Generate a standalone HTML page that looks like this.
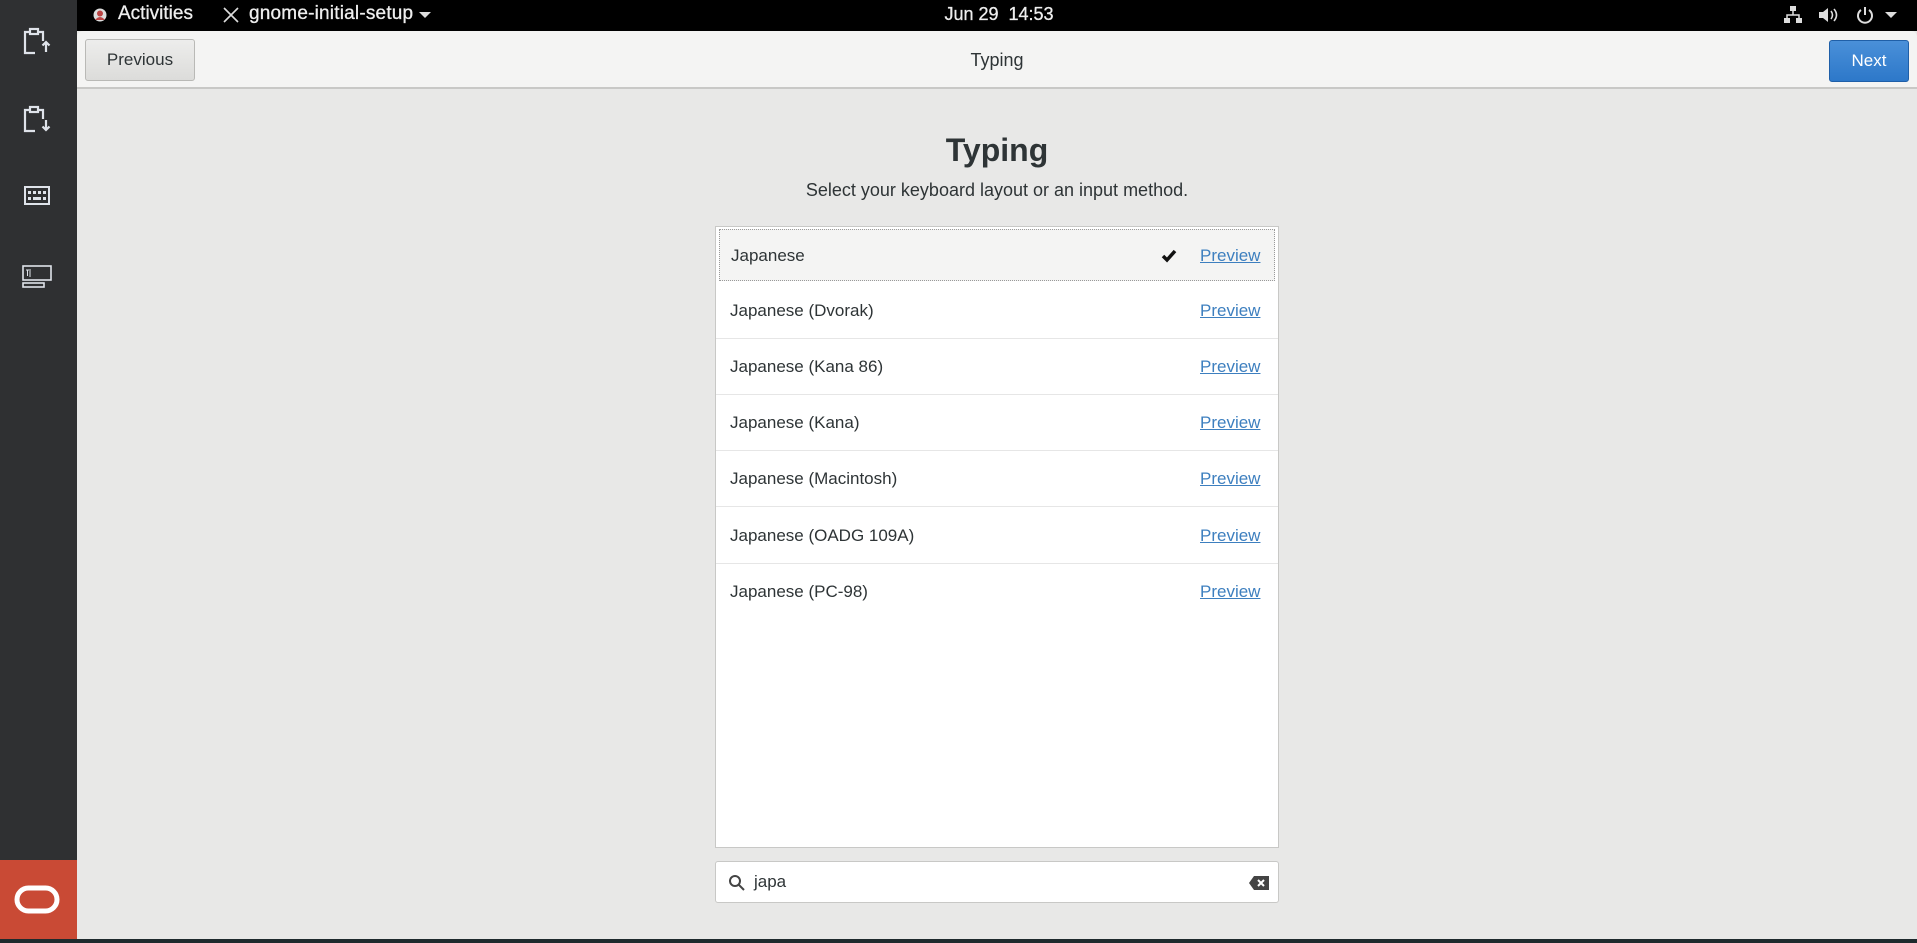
<!DOCTYPE html>
<html><head><meta charset="utf-8"><style>
*{margin:0;padding:0;box-sizing:border-box}
body{width:1917px;height:943px;overflow:hidden;background:#e8e8e7;font-family:"Liberation Sans","DejaVu Sans",sans-serif;position:relative}
.side{position:absolute;left:0;top:0;width:77px;height:939px;background:#2f3032}
.orc{position:absolute;left:0;top:860px;width:77px;height:79px;background:#c94a35}
.bot{position:absolute;left:0;top:939px;width:1917px;height:4px;background:#1e2a2d}
.topbar{position:absolute;left:77px;top:0;width:1840px;height:31px;background:#000;color:#eee;font-size:19px;-webkit-text-stroke:0.3px #eee}
.hdr{position:absolute;left:77px;top:31px;width:1840px;height:58px;background:#f4f4f3;border-bottom:2px solid #c8c8c6;border-radius:6px 6px 0 0}
.btn{position:absolute;height:42px;border-radius:3px;font-size:17px;text-align:center;line-height:40px}
.row{position:absolute;left:716px;width:562px;height:56px;border-bottom:1px solid #e6e6e6;font-size:17px;color:#2e3436}
.row span.t{position:absolute;left:14px;top:18px}
.row span.p{position:absolute;left:484px;top:18px;color:#3d7fbf;text-decoration:underline}
</style></head><body>
<div class="side">
 <svg style="position:absolute;left:23px;top:27px" width="30" height="28" viewBox="0 0 30 28" fill="none" stroke="#dfe3ea" stroke-width="2.2"><path d="M12 26H2V5h4M16 5h4v9"/><rect x="7" y="2" width="8" height="5"/><path d="M23 25V15M19.5 18.5L23 15l3.5 3.5"/></svg>
 <svg style="position:absolute;left:23px;top:105px" width="30" height="28" viewBox="0 0 30 28" fill="none" stroke="#dfe3ea" stroke-width="2.2"><path d="M12 26H2V5h4M16 5h4v9"/><rect x="7" y="2" width="8" height="5"/><path d="M23 15v10M19.5 21.5L23 25l3.5-3.5"/></svg>
 <svg style="position:absolute;left:24px;top:186px" width="26" height="20" viewBox="0 0 26 20"><rect x="1" y="1" width="24" height="17" fill="none" stroke="#dfe3ea" stroke-width="2"/><g fill="#dfe3ea"><rect x="4" y="5" width="3" height="3"/><rect x="9" y="5" width="3" height="3"/><rect x="14" y="5" width="3" height="3"/><rect x="19" y="5" width="3" height="3"/><rect x="4" y="11" width="3" height="3"/><rect x="9" y="11" width="8" height="3"/><rect x="19" y="11" width="3" height="3"/></g></svg>
 <svg style="position:absolute;left:22px;top:265px" width="30" height="24" viewBox="0 0 30 24" fill="none" stroke="#dfe3ea" stroke-width="1.6"><rect x="1" y="1" width="28" height="14"/><rect x="1" y="18" width="21" height="4"/><path d="M4 5h3M5.5 5v6M8 4v8" stroke-width="1"/></svg>
</div>
<div class="orc"><svg style="position:absolute;left:14px;top:25px" width="47" height="30" viewBox="0 0 47 30"><rect x="3" y="3" width="40" height="23" rx="11.5" fill="none" stroke="#fff" stroke-width="5"/></svg></div>
<div class="bot"></div>
<div class="topbar">
 <svg style="position:absolute;left:16px;top:8px" width="14" height="14"><circle cx="7" cy="7" r="6.5" fill="#ddd"/><circle cx="7" cy="5.5" r="3" fill="#b44"/><path d="M2 12q5-6 10 0" fill="#b44"/></svg>
 <span style="position:absolute;left:41px;top:3px">Activities</span>
 <svg style="position:absolute;left:145px;top:6px" width="18" height="18" stroke="#ddd" stroke-width="1.6"><path d="M2 2l14 14M16 2L2 16"/></svg>
 <span style="position:absolute;left:172px;top:3px;letter-spacing:0.2px">gnome-initial-setup</span>
 <svg style="position:absolute;left:342px;top:12px" width="12" height="7"><path d="M0 0h12L6 6z" fill="#ddd"/></svg>
 <span style="position:absolute;left:857px;top:4px;width:130px;text-align:center;font-size:18px">Jun 29&nbsp; 14:53</span>
 <svg style="position:absolute;left:1706px;top:5px" width="20" height="20" fill="#ddd"><rect x="7" y="1" width="6" height="5"/><rect x="1" y="13" width="6" height="5"/><rect x="13" y="13" width="6" height="5"/><path d="M10 6v4M4 13v-3h12v3" stroke="#ddd" stroke-width="1.5" fill="none"/></svg>
 <svg style="position:absolute;left:1741px;top:6px" width="22" height="18" fill="#ddd"><path d="M1 6h4l5-4v14l-5-4H1z"/><path d="M13 5q3 4 0 8M16 3q5 6 0 12" stroke="#ddd" stroke-width="1.6" fill="none"/></svg>
 <svg style="position:absolute;left:1778px;top:5px" width="20" height="20" fill="none" stroke="#ddd" stroke-width="2"><path d="M6 5a7 7 0 1 0 8 0M10 2v8"/></svg>
 <svg style="position:absolute;left:1808px;top:12px" width="12" height="7"><path d="M0 0h12L6 6z" fill="#ddd"/></svg>
</div>
<div class="hdr">
 <div class="btn" style="left:8px;top:8px;width:110px;background:linear-gradient(#ededec,#dcdcda);border:1px solid #b9b9b6;color:#2e3436">Previous</div>
 <div style="position:absolute;left:0;width:1840px;top:19px;text-align:center;font-size:18px;color:#2e3436">Typing</div>
 <div class="btn" style="left:1752px;top:9px;width:80px;background:linear-gradient(#4a90d9,#2d78c9);border:1px solid #1f5fa8;color:#fff">Next</div>
</div>
<div style="position:absolute;left:0;width:1994px;top:132px;text-align:center;font-size:32px;font-weight:bold;color:#2e3436">Typing</div>
<div style="position:absolute;left:0;width:1994px;top:180px;text-align:center;font-size:18px;color:#2e3436">Select your keyboard layout or an input method.</div>
<div style="position:absolute;left:715px;top:226px;width:564px;height:622px;background:#fff;border:1px solid #c8c8c6"></div>
<div class="row" style="top:229px;left:719px;width:556px;height:52px;background:#f4f4f3;border:1px dotted #999"><span class="t" style="left:11px;top:16px">Japanese</span><svg style="position:absolute;left:441px;top:19px" width="16" height="14"><path d="M2 7l4 4 8-9" stroke="#111" stroke-width="3.5" fill="none"/></svg><span class="p" style="left:480px;top:16px">Preview</span></div>
<div class="row" style="top:283px"><span class="t">Japanese (Dvorak)</span><span class="p">Preview</span></div>
<div class="row" style="top:339px"><span class="t">Japanese (Kana 86)</span><span class="p">Preview</span></div>
<div class="row" style="top:395px"><span class="t">Japanese (Kana)</span><span class="p">Preview</span></div>
<div class="row" style="top:451px"><span class="t">Japanese (Macintosh)</span><span class="p">Preview</span></div>
<div class="row" style="top:508px"><span class="t">Japanese (OADG 109A)</span><span class="p">Preview</span></div>
<div class="row" style="top:564px;border-bottom:none"><span class="t">Japanese (PC-98)</span><span class="p">Preview</span></div>
<div style="position:absolute;left:715px;top:861px;width:564px;height:42px;background:#fff;border:1px solid #c8c8c6;border-radius:3px">
 <svg style="position:absolute;left:12px;top:12px" width="18" height="18" fill="none" stroke="#444" stroke-width="2"><circle cx="7" cy="7" r="5"/><path d="M11 11l5 5"/></svg>
 <span style="position:absolute;left:38px;top:10px;font-size:17px;color:#2e3436">japa</span>
 <svg style="position:absolute;left:532px;top:13px" width="22" height="16"><path d="M6 1h15v14H6L1 8z" fill="#444"/><path d="M10 5l6 6M16 5l-6 6" stroke="#fff" stroke-width="2"/></svg>
</div>
</body></html>
